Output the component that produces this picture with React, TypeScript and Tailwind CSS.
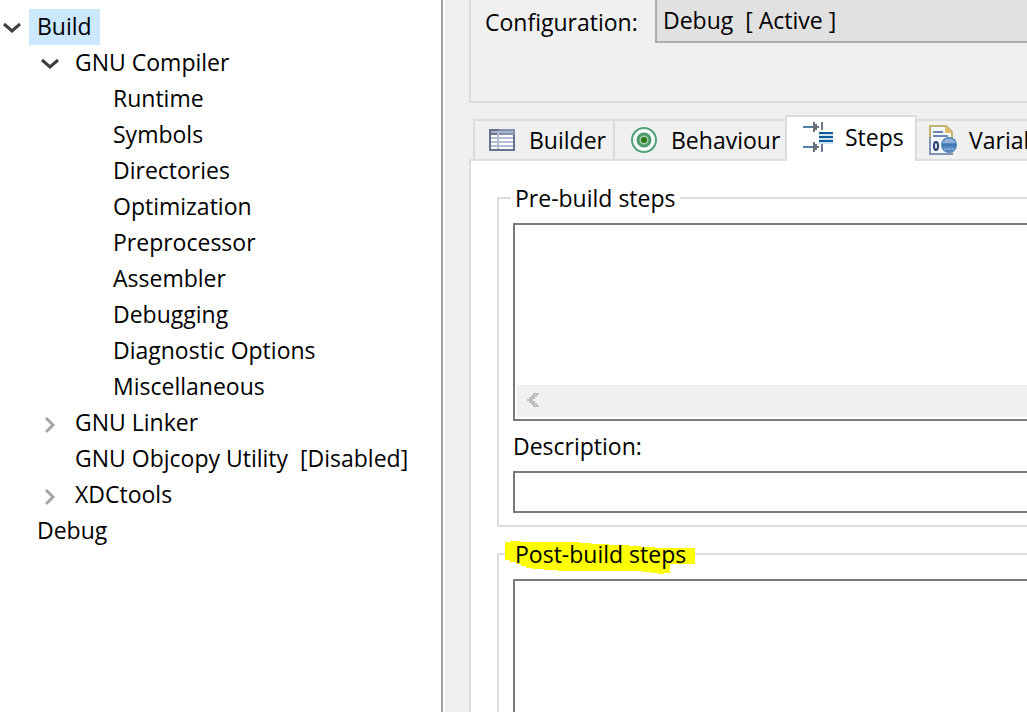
import { useState } from "react";
import type { ReactNode } from "react";

interface TreeItem {
  label: string;
  level: 0 | 1 | 2;
  state?: "open" | "closed";
}

const ITEMS: TreeItem[] = [
  { label: "Build", level: 0, state: "open" },
  { label: "GNU Compiler", level: 1, state: "open" },
  { label: "Runtime", level: 2 },
  { label: "Symbols", level: 2 },
  { label: "Directories", level: 2 },
  { label: "Optimization", level: 2 },
  { label: "Preprocessor", level: 2 },
  { label: "Assembler", level: 2 },
  { label: "Debugging", level: 2 },
  { label: "Diagnostic Options", level: 2 },
  { label: "Miscellaneous", level: 2 },
  { label: "GNU Linker", level: 1, state: "closed" },
  { label: "GNU Objcopy Utility\u00a0 [Disabled]", level: 1 },
  { label: "XDCtools", level: 1, state: "closed" },
  { label: "Debug", level: 0 },
];

const INDENT = ["pl-0", "pl-[38px]", "pl-[76px]"];

export default function App() {
  const [selected, setSelected] = useState("Build");

  return (
    <div className="flex h-screen overflow-hidden bg-[#f0f0f0] font-['Open_Sans','Noto_Sans',sans-serif] text-[23px] leading-8 text-black">
      <nav className="w-[443px] flex-none border-r-2 border-[#a0a0a0] bg-white pt-[9px]">
        <ul>
          {ITEMS.map((item) => (
            <li key={item.label} className={`flex h-9 items-center ${INDENT[item.level]}`}>
              <span className="flex w-[29px] flex-none pl-[3px]">
                {item.state && <Chevron open={item.state === "open"} />}
              </span>
              <button
                type="button"
                onClick={() => setSelected(item.label)}
                className={`h-9 px-2 pb-[2px] whitespace-nowrap ${selected === item.label ? "bg-[#cce8ff]" : ""}`}
              >
                {item.label}
              </button>
            </li>
          ))}
        </ul>
      </nav>

      <main className="flex min-w-0 flex-1 flex-col border-l-2 border-white pl-6">
        <div className="flex h-[103px] flex-none items-start border-b-2 border-l-2 border-[#dcdcdc] pl-[14px]">
          <label htmlFor="configuration" className="w-[170px] flex-none pt-[6px]">
            Configuration:
          </label>
          <select
            id="configuration"
            className="h-[43px] min-w-0 flex-1 appearance-none border-b-2 border-l-2 border-[#adadad] bg-[#e1e1e1] pb-[2px] pl-[6px]"
          >
            <option>{"Debug\u00a0 [ Active ]"}</option>
          </select>
        </div>
        <Tabs />
        <section className="min-h-0 flex-1 overflow-hidden border-l-2 border-[#dcdcdc] bg-white pt-[21px] pl-[26px]">
          <StepGroup title="Pre-build steps">
            <label htmlFor="pre-description" className="pt-[9px] pb-[9px]">
              Description:
            </label>
            <input
              id="pre-description"
              type="text"
              className="h-[42px] border-y-2 border-l-2 border-[#7a7a7a] px-2 outline-none"
            />
          </StepGroup>
          <StepGroup title="Post-build steps" highlighted />
        </section>
      </main>
    </div>
  );
}

function Chevron({ open }: { open: boolean }) {
  return (
    <svg
      viewBox="0 0 18 20"
      className={`mt-1 h-5 w-[18px] ${open ? "text-[#404040]" : "text-[#a6a6a6]"}`}
      fill="none"
      stroke="currentColor"
      strokeWidth="3"
    >
      <polyline points={open ? "1,5 9,12 17,5" : "5,3 12,10 5,17"} />
    </svg>
  );
}

function Tabs() {
  return (
    <div role="tablist" className="flex h-[58px] flex-none items-end overflow-hidden pl-1 shadow-[inset_0_-2px_0_#dcdcdc]">
      <Tab label="Builder" className="w-[142px] gap-[14px] border-x-2 pl-[14px]" icon={<TableIcon />} />
      <Tab label="Behaviour" className="w-[170px] gap-[14px] pl-4" icon={<TargetIcon />} />
      <button
        type="button"
        role="tab"
        aria-selected
        className="flex h-[46px] w-[132px] flex-none items-center gap-3 border-x-2 border-t-2 border-[#dcdcdc] bg-white pb-1 pl-4 whitespace-nowrap"
      >
        <StepsIcon />
        Steps
      </button>
      <Tab label="Variables" className="w-[160px] gap-3 pl-3" icon={<VariablesIcon />} />
    </div>
  );
}

interface TabProps {
  label: string;
  className: string;
  icon: ReactNode;
}

function Tab({ label, className, icon }: TabProps) {
  return (
    <button
      type="button"
      role="tab"
      aria-selected={false}
      className={`flex h-[42px] flex-none items-center border-y-2 border-[#dcdcdc] whitespace-nowrap ${className}`}
    >
      {icon}
      {label}
    </button>
  );
}

interface StepGroupProps {
  title: string;
  highlighted?: boolean;
  children?: ReactNode;
}

function StepGroup({ title, highlighted, children }: StepGroupProps) {
  return (
    <fieldset className="mb-[11px] min-w-0 border-y-2 border-l-2 border-[#dcdcdc] pb-3 pl-3">
      <legend className="relative px-1">
        {highlighted && (
          <svg viewBox="0 0 190 34" className="absolute top-[3px] -left-[6px] h-[34px] w-[190px]" fill="#ffff00">
            <path d="M0 1H5V0H16V1H75V2H86V3H104V4H124V5H136V6H150V7H190V23H165V32H159V33H153V32H146V31H138V30H53V29H39V28H27V27H21V25H16V23H11V21H5V19H0Z" />
          </svg>
        )}
        <span className="relative">{title}</span>
      </legend>
      <div className="flex flex-col pt-[9px] pl-[2px]">
        <div className="flex h-[198px] flex-col border-y-2 border-l-2 border-[#7a7a7a] pb-[2px] pl-[2px]">
          <textarea aria-label={title} className="min-h-0 flex-1 resize-none outline-none" />
          <div className="flex h-8 items-center bg-[#f0f0f0] pb-[2px] pl-[10px]">
            <svg viewBox="0 0 12 14" className="h-[14px] w-3" fill="#bfbfbf">
              <path d="M6 0H12V2H10V4H8V6H6V8H8V10H10V12H12V14H6V12H4V10H2V8H0V6H2V4H4V2H6Z" />
            </svg>
          </div>
        </div>
        {children}
      </div>
    </fieldset>
  );
}

function TableIcon() {
  return (
    <svg viewBox="0 0 26 22" className="h-[22px] w-[26px] flex-none">
      <path fill="#63738f" d="M0 0H26V22H0Z" />
      <path fill="#8794b0" d="M10 0H26V6H10Z" />
      <path fill="#a9b2ca" d="M2 2H24V4H2Z" />
      <path fill="#fff" d="M2 6H24V20H2Z" />
      <path stroke="#b4bed2" strokeWidth="2" d="M2 9H24M2 13H24M2 17H24M9 2V20" />
    </svg>
  );
}

function TargetIcon() {
  return (
    <svg viewBox="0 0 26 26" className="h-[26px] w-[26px] flex-none" fill="none">
      <circle cx="13" cy="13" r="12" fill="#f5fbf7" stroke="#4fa273" strokeWidth="2" />
      <circle cx="13" cy="13" r="6" fill="#a8d0ae" stroke="#4b9b6c" strokeWidth="3" />
      <circle cx="13" cy="13" r="3" fill="#28780f" />
    </svg>
  );
}

function StepsIcon() {
  return (
    <svg viewBox="0 0 30 30" className="h-[30px] w-[30px] flex-none">
      <path stroke="#4f82a8" strokeWidth="2" d="M0 5H12M0 25H12" />
      <path fill="#68727e" d="M10 0H12V2H14V4H16V6H14V8H12V10H10V6H8V4H10ZM10 20H12V22H14V24H16V26H14V28H12V30H10V26H8V24H10Z" />
      <path stroke="#747b91" strokeWidth="2" d="M19 0V8M19 22V30" />
      <path fill="#cfe2f1" d="M16 10H30V22H16Z" />
      <path stroke="#125b9b" strokeWidth="2" d="M16 11H30M16 15H30M16 19H30" />
    </svg>
  );
}

function VariablesIcon() {
  return (
    <svg viewBox="0 0 28 30" className="h-[30px] w-7 flex-none">
      <path fill="#f4f7fd" stroke="#c1b070" strokeWidth="2" d="M1 1H17L23 7V29H1Z" />
      <path stroke="#8094b8" strokeWidth="2" d="M1 12V29H24" fill="none" />
      <path fill="#e2bd68" d="M16 0L24 8H16Z" />
      <path stroke="#6d87b5" strokeWidth="2" d="M4 7H14M4 11H19" />
      <ellipse cx="7" cy="21" rx="2" ry="4" fill="none" stroke="#223f6b" strokeWidth="2" />
      <circle cx="20" cy="20" r="8" fill="#5486bd" />
      <path fill="#8fb5dc" d="M16 14H24V16H26V18H14V16H16Z" />
      <path fill="#3f75b0" d="M13 19H27V21H13Z" />
      <path fill="#79a3cf" d="M15 23H25V25H15Z" />
    </svg>
  );
}
